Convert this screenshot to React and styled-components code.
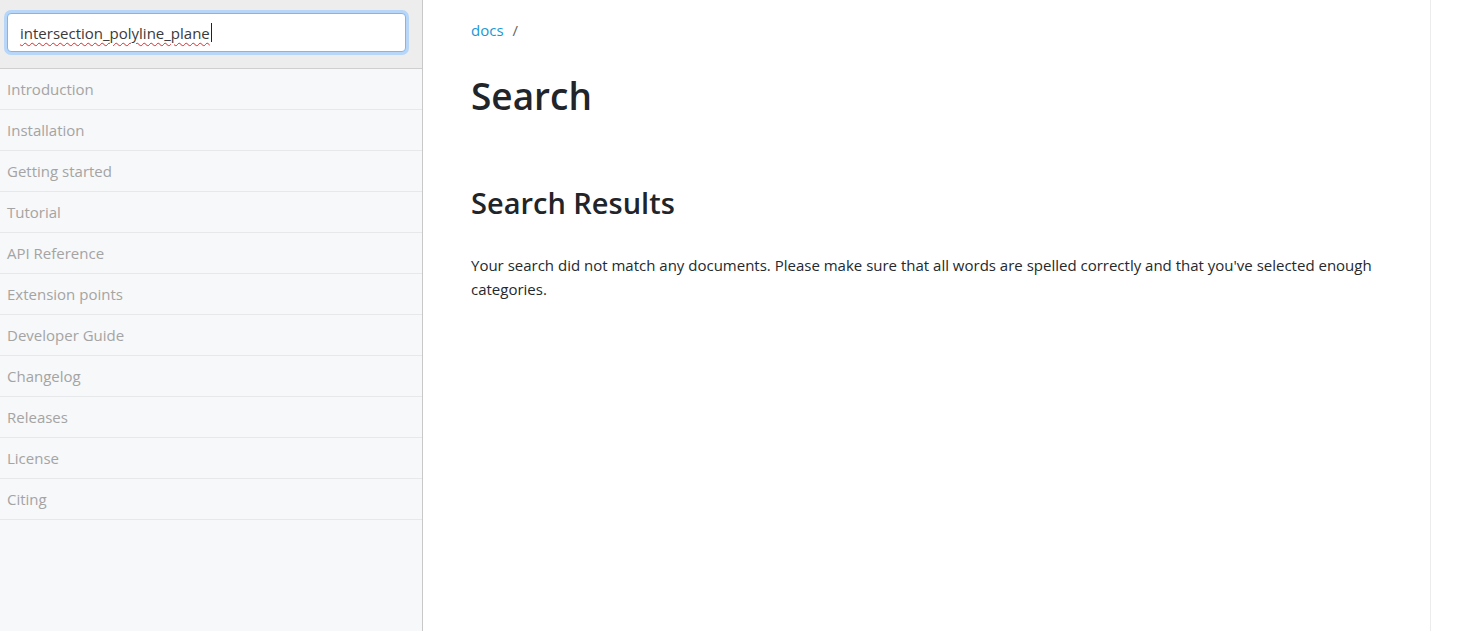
import React from "react";
import styled, { createGlobalStyle } from "styled-components";

const GlobalStyle = createGlobalStyle`
  html, body {
    margin: 0;
    padding: 0;
    height: 100%;
    background: #fff;
    font-family: "Open Sans", "Noto Sans", sans-serif;
  }
  #root {
    height: 100%;
  }
`;

const query = "intersection_polyline_plane";

const navItems = [
  "Introduction",
  "Installation",
  "Getting started",
  "Tutorial",
  "API Reference",
  "Extension points",
  "Developer Guide",
  "Changelog",
  "Releases",
  "License",
  "Citing",
];

export default function App() {
  return (
    <>
      <GlobalStyle />
      <Page>
        <Sidebar>
          <SearchBar>
            <InputWrap>
              <SearchInput type="text" defaultValue={query} spellCheck={false} />
              <Squiggle aria-hidden="true">
                {query}
                <Caret />
              </Squiggle>
            </InputWrap>
          </SearchBar>
          <NavList>
            {navItems.map((item) => (
              <NavItem key={item}>{item}</NavItem>
            ))}
          </NavList>
        </Sidebar>
        <Main>
          <Breadcrumb>
            <CrumbLink href="#">docs</CrumbLink>
            <Slash>/</Slash>
          </Breadcrumb>
          <Title>Search</Title>
          <SubTitle>Search Results</SubTitle>
          <Message>
            Your search did not match any documents. Please make sure that all
            words are spelled correctly and that you've selected enough
            categories.
          </Message>
        </Main>
        <Gutter />
      </Page>
    </>
  );
}

const Page = styled.div`
  display: flex;
  height: 631px;
  overflow: hidden;
`;

const Sidebar = styled.div`
  width: 422px;
  flex-shrink: 0;
  background: #f7f8f9;
  border-right: 1px solid #c8c8c8;
  display: flex;
  flex-direction: column;
`;

const SearchBar = styled.div`
  background: #ededed;
  height: 69px;
  border-bottom: 1px solid #cfcfcf;
  padding: 13px 16px 0 7px;
  box-sizing: border-box;
`;

const InputWrap = styled.div`
  position: relative;
`;

const SearchInput = styled.input`
  display: block;
  width: 100%;
  height: 39px;
  box-sizing: border-box;
  border: 1px solid #80b5ee;
  border-radius: 4px;
  box-shadow: 0 0 0 3px #b8d6f7;
  outline: none;
  padding: 0 12px;
  font-family: "Open Sans", "Noto Sans", sans-serif;
  font-size: 15px;
  color: #3a3a3a;
`;

const Squiggle = styled.span`
  position: absolute;
  left: 13px;
  top: 0;
  height: 39px;
  display: flex;
  align-items: center;
  pointer-events: none;
  font-size: 15px;
  color: transparent;
  text-decoration: underline wavy #e02828;
  text-decoration-thickness: 1px;
  text-underline-offset: 3px;
  white-space: pre;
`;

const Caret = styled.span`
  display: inline-block;
  width: 1px;
  height: 19px;
  background: #222;
  margin-left: 1px;
`;

const NavList = styled.div`
  display: flex;
  flex-direction: column;
`;

const NavItem = styled.div`
  height: 41px;
  box-sizing: border-box;
  border-bottom: 1px solid #e6e8ea;
  padding: 0 7px;
  display: flex;
  align-items: center;
  font-size: 15px;
  color: #a4a4a4;
`;

const Main = styled.div`
  width: 1008px;
  flex-shrink: 0;
  box-sizing: border-box;
  padding: 18px 48px 0 48px;
  border-right: 1px solid #ececec;
  color: #24292e;
`;

const Breadcrumb = styled.div`
  display: flex;
  align-items: center;
  gap: 9px;
  font-size: 15px;
  height: 24px;
`;

const CrumbLink = styled.a`
  color: #1a97d5;
  text-decoration: none;
`;

const Slash = styled.span`
  color: #666;
`;

const Title = styled.h1`
  margin: 30px 0 0;
  font-size: 37px;
  font-weight: 600;
  line-height: 48px;
  color: #212529;
`;

const SubTitle = styled.h2`
  margin: 63px 0 0;
  font-size: 29px;
  font-weight: 600;
  line-height: 40px;
  color: #212529;
`;

const Message = styled.p`
  margin: 30px 0 0;
  font-size: 15px;
  line-height: 24px;
  color: #24292e;
`;

const Gutter = styled.div`
  flex: 1;
  background: #fff;
`;
